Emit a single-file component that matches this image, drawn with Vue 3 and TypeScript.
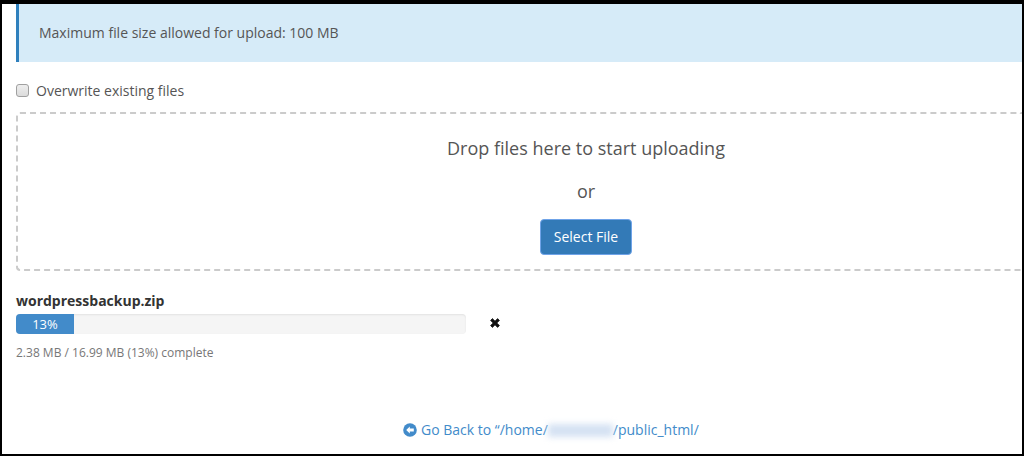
<script setup lang="ts">
const fileName = 'wordpressbackup.zip'
const percent = 13
const trackWidth = 450
const fillWidth = Math.floor((trackWidth * percent) / 100)
</script>

<template>
  <div class="frame">
    <div class="alert">Maximum file size allowed for upload: 100 MB</div>
    <label class="overwrite">
      <span class="check"></span>
      <span>Overwrite existing files</span>
    </label>
    <div class="drop">
      <div class="drop-title">Drop files here to start uploading</div>
      <div class="drop-or">or</div>
      <button class="select">Select File</button>
    </div>
    <div class="file">
      <div class="file-name">{{ fileName }}</div>
      <div class="progress-row">
        <div class="track">
          <div class="fill" :style="{ width: fillWidth + 'px' }">{{ percent }}%</div>
        </div>
        <svg class="remove" viewBox="0 0 12 12" width="12" height="12">
          <path d="M1.6 3.4 3.4 1.6 6 4.2 8.6 1.6 10.4 3.4 7.8 6 10.4 8.6 8.6 10.4 6 7.8 3.4 10.4 1.6 8.6 4.2 6Z" fill="#111" stroke="#111" stroke-width="0.8" stroke-linejoin="round" />
        </svg>
      </div>
      <div class="file-status">2.38 MB / 16.99 MB (13%) complete</div>
    </div>
    <div class="back">
      <svg class="back-icon" viewBox="0 0 14 14" width="14" height="14">
        <circle cx="7" cy="7" r="6.8" fill="#428bca" />
        <path d="M6.8 3.4 3.2 7l3.6 3.6V8.4h4V5.6h-4Z" fill="#fff" />
      </svg>
      <span>Go Back to “/home/<span class="blur"></span>/public_html/</span>
    </div>
  </div>
</template>

<style>
html, body { margin: 0; background: #000; }
</style>

<style scoped>
.frame {
  box-sizing: border-box;
  width: 1024px;
  height: 456px;
  background: #fff;
  border-style: solid;
  border-color: #000;
  border-width: 4px 2px 2px 2px;
  padding-left: 14px;
  display: flex;
  flex-direction: column;
  font-family: "Open Sans", sans-serif;
  font-size: 14px;
  color: #555;
  overflow: hidden;
}
.alert {
  box-sizing: border-box;
  height: 58px;
  flex: none;
  background: #d6ebf8;
  border-left: 3px solid #2f80bd;
  padding: 0 0 2px 20px;
  display: flex;
  align-items: center;
}
.overwrite {
  display: flex;
  align-items: center;
  gap: 7px;
  margin-top: 18px;
  height: 20px;
}
.check {
  box-sizing: border-box;
  width: 13px;
  height: 13px;
  border: 1px solid #a0a0a0;
  border-radius: 3px;
  background: linear-gradient(#eeeeee, #dcdcdc);
}
.drop {
  box-sizing: border-box;
  width: 1006px;
  height: 159px;
  flex: none;
  margin-top: 12px;
  border: 2px dashed #cbcbcb;
  border-right: none;
  border-radius: 4px 0 0 4px;
  display: flex;
  flex-direction: column;
  align-items: center;
  padding-left: 132px;
  padding-top: 22px;
}
.drop-title { font-size: 18px; line-height: 24px; }
.drop-or { font-size: 18px; line-height: 24px; margin-top: 19px; }
.select {
  margin-top: 16px;
  box-sizing: border-box;
  width: 92px;
  height: 36px;
  font: inherit;
  font-size: 14px;
  color: #fff;
  background: #337ab7;
  border: 1px solid #6fa3e8;
  border-radius: 4px;
  padding: 0 0 1px;
}
.file { margin-top: 20px; }
.file-name { font-weight: 700; color: #333; line-height: 20px; }
.progress-row {
  display: flex;
  align-items: center;
  margin-top: 3px;
}
.track {
  width: 450px;
  height: 20px;
  background: #f5f5f5;
  border-radius: 4px;
  overflow: hidden;
  box-shadow: inset 0 1px 2px rgba(0, 0, 0, 0.08);
}
.fill {
  height: 100%;
  background: #428bca;
  color: #fff;
  font-size: 13px;
  line-height: 20px;
  text-align: center;
}
.remove { margin-left: 23px; margin-top: -3px; }
.file-status { margin-top: 10px; font-size: 12px; line-height: 17px; color: #777; }
.back {
  margin-top: auto;
  margin-bottom: 14px;
  padding-left: 387px;
  display: flex;
  align-items: center;
  gap: 4px;
  color: #428bca;
  line-height: 20px;
}
.blur {
  display: inline-block;
  width: 65px;
  height: 13px;
  vertical-align: -2px;
  background: #d5e2f3;
  filter: blur(3px);
}
</style>
